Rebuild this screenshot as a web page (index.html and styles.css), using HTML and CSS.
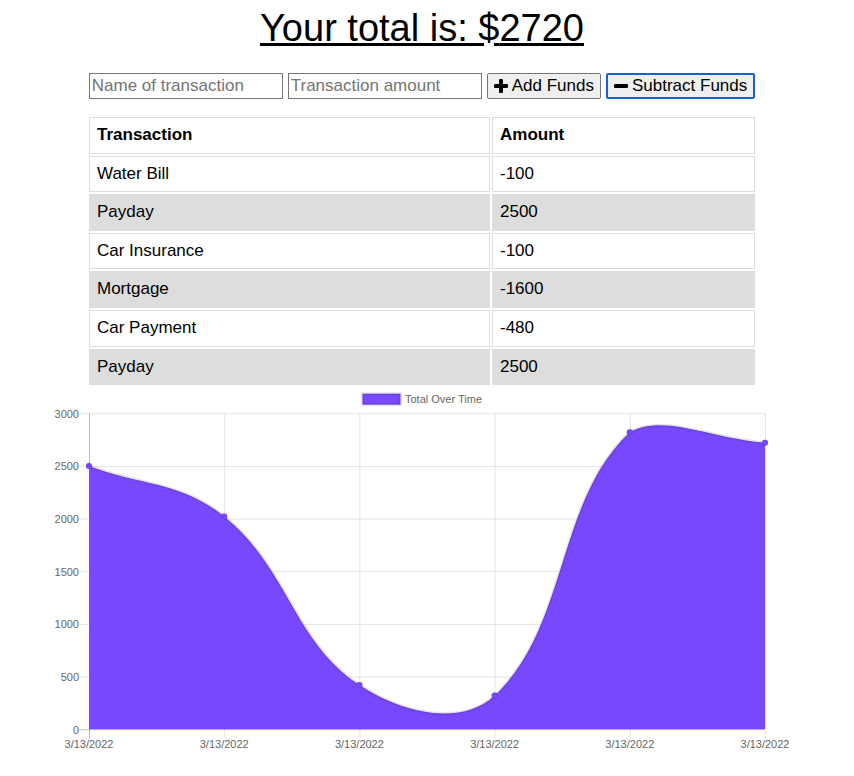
FILE: index.html
```html
<!DOCTYPE html>
<html lang="en">
<head>
  <meta charset="UTF-8">
  <meta name="viewport" content="width=device-width, initial-scale=1.0">
  <title>Budget Tracker</title>
  <link rel="stylesheet" href="styles.css">
</head>
<body>
  <div class="wrapper">
    <h1 class="total">Your total is: $<span id="total">2720</span></h1>

    <div class="form">
      <input type="text" id="t-name" placeholder="Name of transaction">
      <input type="text" id="t-amount" placeholder="Transaction amount">
      <button id="add-btn">
        <svg class="icon" viewBox="0 0 14 14"><rect x="5" y="0" width="4" height="14" rx="1"/><rect x="0" y="5" width="14" height="4" rx="1"/></svg>
        Add Funds
      </button>
      <button id="sub-btn" class="focused">
        <svg class="icon" viewBox="0 0 14 14"><rect x="0" y="5" width="14" height="4" rx="1"/></svg>
        Subtract Funds
      </button>
    </div>

    <table class="transactions">
      <thead>
        <tr><th class="col-name">Transaction</th><th>Amount</th></tr>
      </thead>
      <tbody id="tbody">
        <tr><td>Water Bill</td><td>-100</td></tr>
        <tr><td>Payday</td><td>2500</td></tr>
        <tr><td>Car Insurance</td><td>-100</td></tr>
        <tr><td>Mortgage</td><td>-1600</td></tr>
        <tr><td>Car Payment</td><td>-480</td></tr>
        <tr><td>Payday</td><td>2500</td></tr>
      </tbody>
    </table>

    <div class="chart">
      <svg viewBox="0 387.8 844 372" width="844" height="372">
        <!-- legend -->
        <rect x="362.5" y="394.5" width="38" height="11" class="legend-box"/>
        <text x="405" y="404" class="legend-text">Total Over Time</text>

        <!-- grid -->
        <g class="grid">
          <line x1="79" y1="414.5" x2="765" y2="414.5"/>
          <line x1="79" y1="467.2" x2="765" y2="467.2"/>
          <line x1="79" y1="519.8" x2="765" y2="519.8"/>
          <line x1="79" y1="572.5" x2="765" y2="572.5"/>
          <line x1="79" y1="625.2" x2="765" y2="625.2"/>
          <line x1="79" y1="677.8" x2="765" y2="677.8"/>
          <line x1="224.7" y1="414" x2="224.7" y2="740"/>
          <line x1="359.9" y1="414" x2="359.9" y2="740"/>
          <line x1="495.1" y1="414" x2="495.1" y2="740"/>
          <line x1="630.3" y1="414" x2="630.3" y2="740"/>
          <line x1="765.5" y1="414" x2="765.5" y2="740"/>
        </g>
        <g class="grid zero">
          <line x1="79" y1="730.5" x2="765" y2="730.5"/>
          <line x1="89.5" y1="414" x2="89.5" y2="740"/>
        </g>

        <!-- y labels -->
        <g class="tick y-tick">
          <text x="79" y="418.5">3000</text>
          <text x="79" y="471.2">2500</text>
          <text x="79" y="523.8">2000</text>
          <text x="79" y="576.5">1500</text>
          <text x="79" y="629.2">1000</text>
          <text x="79" y="681.8">500</text>
          <text x="79" y="734.5">0</text>
        </g>

        <!-- x labels -->
        <g class="tick x-tick">
          <text x="89" y="749">3/13/2022</text>
          <text x="224.2" y="749">3/13/2022</text>
          <text x="359.4" y="749">3/13/2022</text>
          <text x="494.6" y="749">3/13/2022</text>
          <text x="629.8" y="749">3/13/2022</text>
          <text x="765" y="749">3/13/2022</text>
        </g>

        <!-- dataset -->
        <path class="area" d="M89 466.7 C143.1 486.9 180.9 482.1 224.2 517.2 C289.1 569.8 292.9 641.8 359.4 685.8 C401.1 713.4 460.6 728.1 494.6 696.3 C568.8 627 555.6 502.4 629.8 433 C663.8 414 710.9 439.3 765 443.5 L765 730 L89 730 Z"/>
        <path class="line" d="M89 466.7 C143.1 486.9 180.9 482.1 224.2 517.2 C289.1 569.8 292.9 641.8 359.4 685.8 C401.1 713.4 460.6 728.1 494.6 696.3 C568.8 627 555.6 502.4 629.8 433 C663.8 414 710.9 439.3 765 443.5"/>
        <g class="points">
          <circle cx="89" cy="466.7" r="3"/>
          <circle cx="224.2" cy="517.2" r="3"/>
          <circle cx="359.4" cy="685.8" r="3"/>
          <circle cx="494.6" cy="696.3" r="3"/>
          <circle cx="629.8" cy="433" r="3"/>
          <circle cx="765" cy="443.5" r="3"/>
        </g>
      </svg>
    </div>
  </div>
</body>
</html>
```

FILE: styles.css
```css
body {
  margin: 0;
  font-family: "Liberation Sans", Arial, sans-serif;
  color: #000;
  background-color: #fff;
}

.wrapper {
  width: 844px;
}

.total {
  margin: 7px 0 0;
  font-size: 38px;
  font-weight: normal;
  text-align: center;
  text-decoration: underline;
}

/* form */
.form {
  display: flex;
  justify-content: center;
  gap: 5px;
  margin-top: 23px;
}

.form input {
  box-sizing: border-box;
  width: 194px;
  height: 26px;
  padding: 1px 2px;
  border: 1px solid #767676;
  font: 17px "Liberation Sans", Arial, sans-serif;
}

.form input::placeholder {
  color: #757575;
}

.form button {
  box-sizing: border-box;
  display: flex;
  align-items: center;
  gap: 4px;
  height: 26px;
  padding: 0 6px;
  background-color: #efefef;
  border: 1px solid #767676;
  border-radius: 2px;
  color: #000;
  font: 17px "Liberation Sans", Arial, sans-serif;
}

.form button.focused {
  border: 2px solid #1b5fd6;
  padding: 0 6px;
}

.icon {
  width: 14px;
  height: 14px;
  fill: #000;
}

/* table */
.transactions {
  width: 670px;
  margin: 16px auto 0;
  table-layout: fixed;
  border-spacing: 2px;
  font-size: 17px;
}

.transactions th,
.transactions td {
  box-sizing: border-box;
  padding: 8px 7px;
  line-height: 18.6px;
  border: 1px solid #ddd;
  text-align: left;
}

.transactions .col-name {
  width: 401px;
}

.transactions tbody tr:nth-child(even) td {
  background-color: #ddd;
}

/* chart */
.chart svg {
  display: block;
  font-family: "Liberation Sans", Arial, sans-serif;
}

.grid line {
  stroke: rgba(0, 0, 0, 0.1);
  stroke-width: 1;
}

.grid.zero line {
  stroke: rgba(0, 0, 0, 0.25);
}

.tick text {
  font-size: 11px;
  fill: #666;
}

.y-tick text {
  text-anchor: end;
}

.x-tick text {
  text-anchor: middle;
}

.legend-box {
  fill: #7848ff;
  stroke: rgba(0, 0, 0, 0.1);
  stroke-width: 3;
}

.legend-text {
  font-size: 11px;
  fill: #666;
}

.area {
  fill: #7848ff;
}

.line {
  fill: none;
  stroke: rgba(0, 0, 0, 0.1);
  stroke-width: 3;
}

.points circle {
  fill: #7848ff;
  stroke: rgba(0, 0, 0, 0.1);
  stroke-width: 1;
}
```
